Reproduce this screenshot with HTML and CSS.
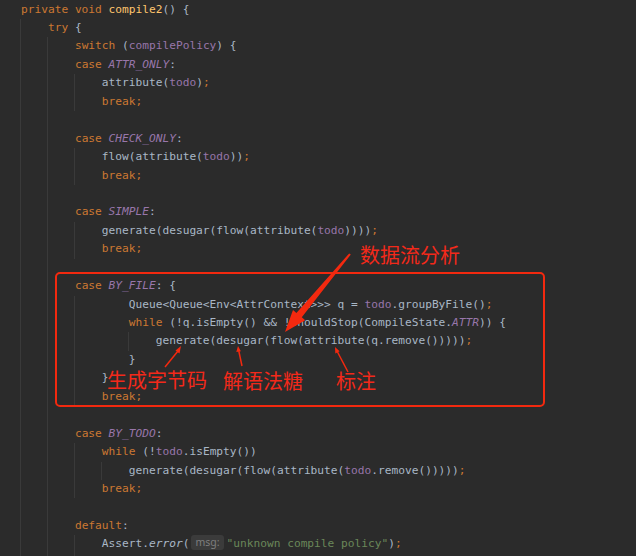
FILE: index.html
```html
<!DOCTYPE html>
<html>
<head>
<meta charset="utf-8">
<link rel="stylesheet" href="styles.css">
</head>
<body>
<div class="editor">
<div class="ln"><span class="k">private void</span> <span class="fn">compile2</span>() {</div>
<div class="blk g0">
<div class="ln">    <span class="k">try</span> {</div>
<div class="blk g4">
<div class="ln">        <span class="k">switch</span> (<span class="f">compilePolicy</span>) {</div>
<div class="ln">        <span class="k">case</span> <span class="c">ATTR_ONLY</span>:</div>
<div class="blk g8">
<div class="ln">            attribute(<span class="f">todo</span>)<span class="k">;</span></div>
<div class="ln">            <span class="k">break;</span></div>
</div>
<div class="ln"> </div>
<div class="ln">        <span class="k">case</span> <span class="c">CHECK_ONLY</span>:</div>
<div class="blk g8">
<div class="ln">            flow(attribute(<span class="f">todo</span>))<span class="k">;</span></div>
<div class="ln">            <span class="k">break;</span></div>
</div>
<div class="ln"> </div>
<div class="ln">        <span class="k">case</span> <span class="c">SIMPLE</span>:</div>
<div class="blk g8">
<div class="ln">            generate(desugar(flow(attribute(<span class="f">todo</span>))))<span class="k">;</span></div>
<div class="ln">            <span class="k">break;</span></div>
</div>
<div class="ln"> </div>
<div class="ln">        <span class="k">case</span> <span class="c">BY_FILE</span>: {</div>
<div class="blk g8">
<div class="ln">                Queue&lt;Queue&lt;Env&lt;AttrContext&gt;&gt;&gt; q = <span class="f">todo</span>.groupByFile()<span class="k">;</span></div>
<div class="ln">                <span class="k">while</span> (!q.isEmpty() &amp;&amp; !shouldStop(CompileState.<span class="c">ATTR</span>)) {</div>
<div class="blk g16">
<div class="ln">                    generate(desugar(flow(attribute(q.remove()))))<span class="k">;</span></div>
</div>
<div class="ln">                }</div>
<div class="ln">            }</div>
<div class="ln">            <span class="k">break;</span></div>
</div>
<div class="ln"> </div>
<div class="ln">        <span class="k">case</span> <span class="c">BY_TODO</span>:</div>
<div class="blk g8">
<div class="ln">            <span class="k">while</span> (!<span class="f">todo</span>.isEmpty())</div>
<div class="blk g12">
<div class="ln">                generate(desugar(flow(attribute(<span class="f">todo</span>.remove()))))<span class="k">;</span></div>
</div>
<div class="ln">            <span class="k">break;</span></div>
</div>
<div class="ln"> </div>
<div class="ln">        <span class="k">default</span>:</div>
<div class="blk g8">
<div class="ln">            Assert.<span class="it">error</span>(<span class="hint">msg:</span><span class="s">"unknown compile policy"</span>)<span class="k">;</span></div>
<div class="ln"> </div>
</div>
</div>
</div>
</div>

<div class="mark-box"></div>
<svg class="arrows" width="636" height="556" viewBox="0 0 636 556">
  <polygon class="red" points="350.8,254.6 301.8,317.3 305.2,320.2 285,332 293,310 296.4,312.9 349.2,253.4"/>
  <line class="thin" x1="165" y1="367" x2="178" y2="351"/>
  <polygon class="red" points="181,346 175.5,350.5 179.5,353.5"/>
  <line class="thin" x1="242" y1="366" x2="238.8" y2="351"/>
  <polygon class="red" points="238,346 236.3,352 240.9,351.2"/>
  <line class="thin" x1="348" y1="372" x2="337.5" y2="352"/>
  <polygon class="red" points="335,347 335.3,353.5 339.6,351.2"/>
</svg>
<div class="note n1">数据流分析</div>
<div class="note n2">生成字节码</div>
<div class="note n3">解语法糖</div>
<div class="note n4">标注</div>
</body>
</html>
```

FILE: styles.css
```css
html, body {
  margin: 0;
  padding: 0;
  background: #2b2b2b;
  width: 636px;
  height: 556px;
  overflow: hidden;
}

.editor {
  margin-top: 0.6px;
  font-family: "DejaVu Sans Mono", "Liberation Mono", monospace;
  font-size: 11.2px;
  line-height: 18.45px;
  color: #a9b7c6;
}

.ln {
  white-space: pre;
  height: 18.45px;
  padding-left: 21px;
}

.blk {
  background-image: linear-gradient(#3a3a3a, #3a3a3a);
  background-repeat: no-repeat;
  background-size: 1px 100%;
}
.g0 { background-position: 20px 0; }
.g4 { background-position: 47px 0; }
.g8 { background-position: 74px 0; }
.g12 { background-position: 101px 0; }
.g16 { background-position: 128px 0; }

.k { color: #cc7832; }
.fn { color: #ffc66d; }
.f { color: #9876aa; }
.c { color: #9876aa; font-style: italic; }
.it { font-style: italic; }
.s { color: #6a8759; }

.hint {
  display: inline-block;
  font-family: "Noto Sans", "DejaVu Sans", sans-serif;
  font-size: 10.5px;
  line-height: 15px;
  color: #7e7e7e;
  background: #3b3b3b;
  border-radius: 3px;
  padding: 0 4px;
  margin: 0 3px 0 2px;
  vertical-align: 1px;
}

.mark-box {
  position: absolute;
  left: 55px;
  top: 272px;
  width: 486px;
  height: 131px;
  border: 2.5px solid #f3290f;
  border-radius: 5px;
}

.arrows {
  position: absolute;
  left: 0;
  top: 0;
}
.red { fill: #f3290f; }
.thin { stroke: #f3290f; stroke-width: 1.5; }

.note {
  position: absolute;
  font-family: "Noto Sans CJK SC", sans-serif;
  font-size: 20px;
  line-height: 20px;
  color: #f3291a;
  white-space: nowrap;
}
.n1 { left: 360px; top: 245px; }
.n2 { left: 107px; top: 370px; }
.n3 { left: 223px; top: 371px; }
.n4 { left: 336px; top: 371px; }
```
